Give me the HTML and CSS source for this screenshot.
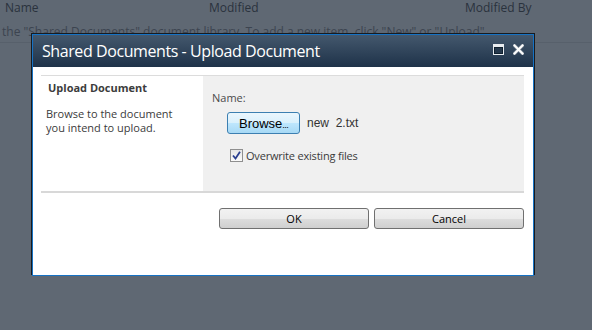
FILE: index.html
```html
<!DOCTYPE html>
<html>
<head>
<meta charset="utf-8">
<link rel="stylesheet" href="styles.css">
</head>
<body>
<div class="page">
  <div class="list-head">
    <span class="col-name">Name</span>
    <span class="col-mod">Modified</span>
    <span class="col-by">Modified By</span>
  </div>
  <div class="list-empty">the "Shared Documents" document library. To add a new item, click "New" or "Upload".</div>
</div>

<div class="dialog">
  <div class="dlg-inner">
    <div class="dlg-title">
      <span class="dlg-caption">Shared Documents - Upload Document</span>
      <div class="dlg-ctrls">
        <svg class="ico" width="11" height="11" viewBox="0 0 11 11">
          <rect x="0.5" y="0.5" width="10" height="10" fill="#1f3246" stroke="#e8ecf0"/>
          <rect x="1" y="1" width="9" height="2" fill="#e8ecf0"/>
          <rect x="1.5" y="3.5" width="8" height="6" fill="#26394d" stroke="#10202f" stroke-width="1"/>
        </svg>
        <svg class="ico" width="11" height="11" viewBox="0 0 11 11">
          <path d="M1.5 1.5 L9.5 9.5 M9.5 1.5 L1.5 9.5" stroke="#7a8694" stroke-width="3.4" stroke-linecap="square"/>
          <path d="M1.5 1.5 L9.5 9.5 M9.5 1.5 L1.5 9.5" stroke="#ffffff" stroke-width="2" stroke-linecap="square"/>
        </svg>
      </div>
    </div>
    <div class="dlg-body">
      <div class="section">
        <div class="sec-desc">
          <h3 class="sec-title">Upload Document</h3>
          <p class="sec-text">Browse to the document you intend to upload.</p>
        </div>
        <div class="sec-ctrl">
          <div class="field-label">Name:</div>
          <div class="file-row">
            <button class="btn-browse">Browse<span class="dots">...</span></button>
            <span class="file-name">new  2.txt</span>
          </div>
          <label class="chk">
            <span class="chk-box">
              <svg width="9" height="9" viewBox="0 0 9 9"><path d="M1 4.5 L3.5 7.5 L8 0.8" fill="none" stroke="#2a3f8f" stroke-width="1.8"/></svg>
            </span>
            <span class="chk-text">Overwrite existing files</span>
          </label>
        </div>
      </div>
      <div class="actions">
        <button class="btn">OK</button>
        <button class="btn">Cancel</button>
      </div>
    </div>
  </div>
</div>
</body>
</html>
```
FILE: styles.css
```css
html, body {
  margin: 0;
  padding: 0;
}
body {
  width: 592px;
  height: 330px;
  background: #5f6873;
  font-family: "Open Sans", "Noto Sans", sans-serif;
  position: relative;
  overflow: hidden;
}
.list-head {
  display: flex;
  height: 16px;
  font-size: 12px;
  color: #2a323d;
  line-height: 16px;
}
.col-name { width: 204px; padding-left: 5px; }
.col-mod { width: 256px; }
.col-by { flex: 1; }
.list-empty {
  margin-top: 7px;
  padding-left: 2px;
  font-size: 12px;
  color: #3c4450;
  height: 19px;
  border-bottom: 1px solid #57606b;
}

.dialog {
  position: absolute;
  left: 31px;
  top: 33px;
  width: 502px;
  height: 240px;
  border: 1px solid #171b20;
}
.dlg-inner {
  height: 100%;
  border: 1px solid #1672c4;
  display: flex;
  flex-direction: column;
}
.dlg-title {
  height: 32px;
  background: linear-gradient(#44586d, #1e3249);
  display: flex;
  align-items: center;
  padding: 0 8px 0 9px;
}
.dlg-caption {
  flex: 1;
  color: #ffffff;
  font-size: 16px;
  letter-spacing: -0.42px;
  margin-top: -1px;
}
.dlg-ctrls {
  display: flex;
  gap: 9px;
  margin-top: -4px;
  margin-right: 1px;
}
.ico { display: block; }

.dlg-body {
  flex: 1;
  background: #ffffff;
  padding: 8px 9px 0 8px;
}
.section {
  display: flex;
  border-top: 1px solid #dcdcdc;
  border-bottom: 2px solid #d8d8d8;
  height: 115px;
}
.sec-desc {
  width: 155px;
  padding-left: 7px;
}
.sec-title {
  margin: 5px 0 0 0;
  font-size: 11px;
  font-weight: bold;
  color: #3c3c3c;
  line-height: 14px;
}
.sec-text {
  margin: 12px 0 0 -2px;
  font-size: 11px;
  line-height: 14px;
  color: #3b3b3b;
  width: 130px;
}
.sec-ctrl {
  flex: 1;
  background: #f0f0f0;
  padding-left: 9px;
}
.field-label {
  margin-top: 16px;
  font-size: 11px;
  color: #4a4a4a;
  line-height: 12px;
}
.file-row {
  display: flex;
  align-items: center;
  margin-top: 8px;
  margin-left: 15px;
  gap: 7px;
}
.btn-browse {
  width: 73px;
  height: 22px;
  font-family: "Liberation Sans", Arial, sans-serif;
  font-size: 13px;
  color: #000;
  border: 1px solid #3c7fb1;
  border-radius: 3px;
  background: linear-gradient(#eaf6fd 0%, #d9f0fc 50%, #bee6fd 51%, #a7d9f5 100%);
  padding: 0;
}
.dots {
  font-size: 9px;
  letter-spacing: -0.6px;
}
.file-name {
  font-family: "Liberation Sans", Arial, sans-serif;
  font-size: 12px;
  color: #333;
  white-space: pre;
}
.chk {
  display: flex;
  align-items: center;
  margin-top: 14px;
  margin-left: 18px;
  gap: 3px;
}
.chk-box {
  width: 11px;
  height: 11px;
  border: 1px solid #8f8f8f;
  background: linear-gradient(#e6e6e6, #fafafa);
  display: flex;
  align-items: center;
  justify-content: center;
}
.chk-box svg { display: block; }
.chk-text {
  font-size: 11px;
  color: #3b3b3b;
  letter-spacing: -0.2px;
}

.actions {
  display: flex;
  justify-content: flex-end;
  gap: 5px;
  margin-top: 15px;
}
.btn {
  width: 150px;
  height: 21px;
  border: 1px solid #707070;
  border-radius: 3px;
  background: linear-gradient(#f2f2f2 0%, #ebebeb 50%, #dddddd 51%, #cfcfcf 100%);
  font-family: "Open Sans", "Noto Sans", sans-serif;
  font-size: 11px;
  color: #000;
  padding: 0;
}
```
